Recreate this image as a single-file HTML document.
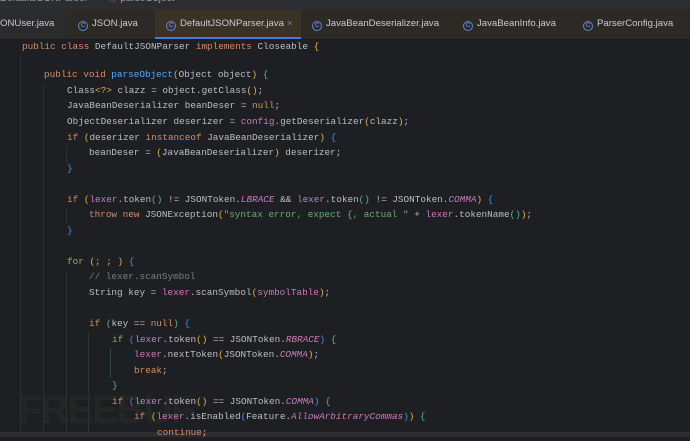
<!DOCTYPE html>
<html><head><meta charset="utf-8"><style>
body{margin:0;width:690px;height:437px;overflow:hidden;background:#1e1f22;font-family:"Liberation Sans",sans-serif;position:relative}
.crumb{position:absolute;left:0;top:0;width:690px;height:10px;background:#2b2d30;color:#9a9da3;font-size:10px;line-height:4px;overflow:hidden}
.tabs{position:absolute;left:0;top:10px;width:690px;height:29px;background:#2d2a25;border-bottom:1px solid #1b1c1e}
.tab{position:absolute;top:0;height:29px;line-height:27px;font-size:9.6px;color:#c9cbd0;white-space:nowrap;box-sizing:border-box}
.ic{display:inline-block;width:8px;height:8px;border:1.2px solid #5c87d6;border-radius:50%;color:#5c87d6;font-size:6px;line-height:8px;text-align:center;vertical-align:-1px;margin-right:4px;font-weight:bold}
.code{position:absolute;left:0;top:0;font-family:"Liberation Mono",monospace;font-size:9.35px;color:#bcbec4;white-space:pre}
.l{position:absolute;height:16px;line-height:16px}
.k{color:#cf8e6d}.m{color:#56a8f5}.p{color:#c77dbb}.s{color:#6aab73}.c{color:#7a7e85}.i{color:#c77dbb;font-style:italic}
.y{color:#e3b341}.b{color:#3d8ff0}.g{color:#5fb38a}
.gl{position:absolute;width:1px;background:#2e3033}
</style></head><body>
<div class="crumb"><span style="position:absolute;left:0;top:-3px">DefaultJSONParser &nbsp;&nbsp;&gt;&nbsp; <span style="color:#d05a5a">ⓜ</span> parseObject</span></div>
<div class="tabs">
<div class="tab" style="left:0;width:68px;background:#2b2b2c">ONUser.java</div>
<div class="tab" style="left:78px"><span class="ic">C</span>JSON.java</div>
<div class="tab" style="left:155px;width:146px;background:#3a3226;border-bottom:2px solid #3d7be0;height:29px;line-height:27px;padding-left:11px"><span class="ic">C</span>DefaultJSONParser.java <span style="color:#888;position:absolute;left:132px">×</span></div>
<div class="tab" style="left:312px"><span class="ic">C</span>JavaBeanDeserializer.java</div>
<div class="tab" style="left:463px"><span class="ic">C</span>JavaBeanInfo.java</div>
<div class="tab" style="left:583px"><span class="ic">C</span>ParserConfig.java</div>
</div>
<div class="gl" style="left:20px;top:55px;height:382px"></div>
<div class="gl" style="left:43px;top:84px;height:353px"></div>
<div class="gl" style="left:66px;top:146px;height:16px"></div>
<div class="gl" style="left:66px;top:208px;height:16px"></div>
<div class="gl" style="left:66px;top:270px;height:167px"></div>
<div class="gl" style="left:88px;top:332px;height:105px"></div>
<div class="gl" style="left:110px;top:348px;height:30px;background:#2d4a3a"></div>
<div style="position:absolute;left:0;top:432px;width:690px;height:5px;background:#2b2d30"></div>
<div style="position:absolute;left:18px;top:388px;font:bold 40px 'Liberation Sans',sans-serif;color:#263029;opacity:.5;letter-spacing:-2px">FREEBUF</div>
<div class="code">
<div class="l" style="left:22px;top:39px"><span class="k">public class</span> DefaultJSONParser <span class="k">implements</span> Closeable <span class="y">{</span></div>
<div class="l" style="left:44px;top:67px"><span class="k">public void</span> <span class="m">parseObject</span><span class="y">(</span>Object object<span class="y">)</span> <span class="g">{</span></div>
<div class="l" style="left:67px;top:83px">Class<span class="y">&lt;?&gt;</span> clazz = object.getClass<span class="y">()</span>;</div>
<div class="l" style="left:67px;top:98px">JavaBeanDeserializer beanDeser = <span class="k">null</span>;</div>
<div class="l" style="left:67px;top:114px">ObjectDeserializer deserizer = <span class="p">config</span>.getDeserializer<span class="y">(</span>clazz<span class="y">)</span>;</div>
<div class="l" style="left:67px;top:130px"><span class="k">if</span> <span class="y">(</span>deserizer <span class="k">instanceof</span> JavaBeanDeserializer<span class="y">)</span> <span class="b">{</span></div>
<div class="l" style="left:89px;top:145px">beanDeser = <span class="y">(</span>JavaBeanDeserializer<span class="y">)</span> deserizer;</div>
<div class="l" style="left:67px;top:161px"><span class="b">}</span></div>
<div class="l" style="left:67px;top:192px"><span class="k">if</span> <span class="y">(</span><span class="p">lexer</span>.token<span class="g">()</span> != JSONToken.<span class="i">LBRACE</span> &amp;&amp; <span class="p">lexer</span>.token<span class="g">()</span> != JSONToken.<span class="i">COMMA</span><span class="y">)</span> <span class="b">{</span></div>
<div class="l" style="left:89px;top:207px"><span class="k">throw new</span> JSONException<span class="y">(</span><span class="s">"syntax error, expect {, actual "</span> + <span class="p">lexer</span>.tokenName<span class="g">()</span><span class="y">)</span>;</div>
<div class="l" style="left:67px;top:223px"><span class="b">}</span></div>
<div class="l" style="left:67px;top:254px"><span class="k">for</span> <span class="y">(; ; )</span> <span class="b">{</span></div>
<div class="l" style="left:89px;top:269px"><span class="c">// lexer.scanSymbol</span></div>
<div class="l" style="left:89px;top:285px">String key = <span class="p">lexer</span>.scanSymbol<span class="y">(</span><span class="p">symbolTable</span><span class="y">)</span>;</div>
<div class="l" style="left:89px;top:316px"><span class="k">if</span> <span class="g">(</span>key == <span class="k">null</span><span class="g">)</span> <span class="b">{</span></div>
<div class="l" style="left:112px;top:332px"><span class="k">if</span> <span class="b">(</span><span class="p">lexer</span>.token<span class="y">()</span> == JSONToken.<span class="i">RBRACE</span><span class="b">)</span> <span class="g">{</span></div>
<div class="l" style="left:134px;top:347px"><span class="p">lexer</span>.nextToken<span class="y">(</span>JSONToken.<span class="i">COMMA</span><span class="y">)</span>;</div>
<div class="l" style="left:134px;top:363px"><span class="k">break</span>;</div>
<div class="l" style="left:112px;top:378px"><span class="g">}</span></div>
<div class="l" style="left:112px;top:394px"><span class="k">if</span> <span class="b">(</span><span class="p">lexer</span>.token<span class="y">()</span> == JSONToken.<span class="i">COMMA</span><span class="b">)</span> <span class="g">{</span></div>
<div class="l" style="left:134px;top:409px"><span class="k">if</span> <span class="y">(</span><span class="p">lexer</span>.isEnabled<span class="b">(</span>Feature.<span class="i">AllowArbitraryCommas</span><span class="b">)</span><span class="y">)</span> <span class="g">{</span></div>
<div class="l" style="left:157px;top:425px"><span class="k">continue</span>;</div>
</div>
</body></html>
